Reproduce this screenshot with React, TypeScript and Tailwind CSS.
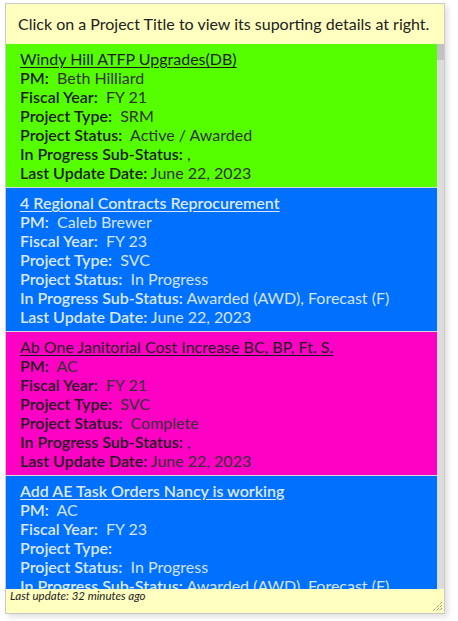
import React from "react";

type Project = {
  title: string;
  pm: string;
  fy: string;
  type: string;
  status: string;
  sub: string;
  updated: string;
  bg: string;
  light: boolean;
};

const projects: Project[] = [
  {
    title: "Windy Hill ATFP Upgrades(DB)",
    pm: "Beth Hilliard",
    fy: "FY 21",
    type: "SRM",
    status: "Active / Awarded",
    sub: ",",
    updated: "June 22, 2023",
    bg: "bg-[#55ff00]",
    light: false,
  },
  {
    title: "4 Regional Contracts Reprocurement",
    pm: "Caleb Brewer",
    fy: "FY 23",
    type: "SVC",
    status: "In Progress",
    sub: "Awarded (AWD), Forecast (F)",
    updated: "June 22, 2023",
    bg: "bg-[#0070ff]",
    light: true,
  },
  {
    title: "Ab One Janitorial Cost Increase BC, BP, Ft. S.",
    pm: "AC",
    fy: "FY 21",
    type: "SVC",
    status: "Complete",
    sub: ",",
    updated: "June 22, 2023",
    bg: "bg-[#ff00c5]",
    light: false,
  },
  {
    title: "Add AE Task Orders Nancy is working",
    pm: "AC",
    fy: "FY 23",
    type: "",
    status: "In Progress",
    sub: "Awarded (AWD), Forecast (F)",
    updated: "June 22, 2023",
    bg: "bg-[#0070ff]",
    light: true,
  },
];

const Row = ({ label, value, light, gap = true }: { label: string; value: string; light: boolean; gap?: boolean }) => (
  <div className="whitespace-nowrap">
    <span className={`font-semibold ${light ? "text-[#dbe9ff]" : "text-[#1c1c1c]"}`}>{label}</span>
    {gap ? "\u00a0 " : " "}
    <span className={light ? "text-[#d3e4ff]" : "text-[#333333]"}>{value}</span>
  </div>
);

const Card = ({ p }: { p: Project }) => (
  <div className={`${p.bg} border-b border-[#d8d8d8] pt-[5px] pb-[5px] pl-[14px] shrink-0`}>
    <div
      className={`underline underline-offset-2 whitespace-nowrap ${
        p.light ? "font-semibold text-[#dbe9ff]" : "text-[#1c1c1c]"
      }`}
    >
      {p.title}
    </div>
    <Row label="PM:" value={p.pm} light={p.light} />
    <Row label="Fiscal Year:" value={p.fy} light={p.light} />
    <Row label="Project Type:" value={p.type} light={p.light} />
    <Row label="Project Status:" value={p.status} light={p.light} />
    <Row label="In Progress Sub-Status:" value={p.sub} light={p.light} gap={false} />
    <Row label="Last Update Date:" value={p.updated} light={p.light} gap={false} />
  </div>
);

export default function App() {
  return (
    <div className="w-[458px] h-[621px] bg-white pt-[3px] pl-[5px]" style={{ fontFamily: "Lato, 'Noto Sans', sans-serif" }}>
      <div className="w-[440px] h-[611px] border border-[#c9c9c9] bg-[#ffffc0] shadow-[3px_3px_5px_rgba(0,0,0,0.12)] flex flex-col">
        <div className="h-[40px] shrink-0 flex items-center pl-[12px] text-[16px] text-[#222]">
          Click on a Project Title to view its suporting details at right.
        </div>
        <div className="flex-1 flex overflow-hidden">
          <div className="flex-1 flex flex-col overflow-hidden text-[16px] leading-[19px]">
            {projects.map((p, i) => (
              <Card key={i} p={p} />
            ))}
          </div>
          <div className="w-[7px] bg-[#dcdcdc] flex flex-col">
            <div className="h-[16px] bg-[#c2c2c2]" />
          </div>
        </div>
        <div className="h-[24px] shrink-0 flex items-start justify-between pl-[4px]">
          <span className="italic text-[11.5px] leading-[14px] text-[#222]">Last update: 32 minutes ago</span>
          <svg width="10" height="10" viewBox="0 0 10 10" className="self-end mb-[1px] mr-[1px]">
            <path d="M9 3 L3 9 M9 6 L6 9 M9 0 L0 9" stroke="#666" strokeWidth="1" strokeDasharray="1 1" />
          </svg>
        </div>
      </div>
    </div>
  );
}
